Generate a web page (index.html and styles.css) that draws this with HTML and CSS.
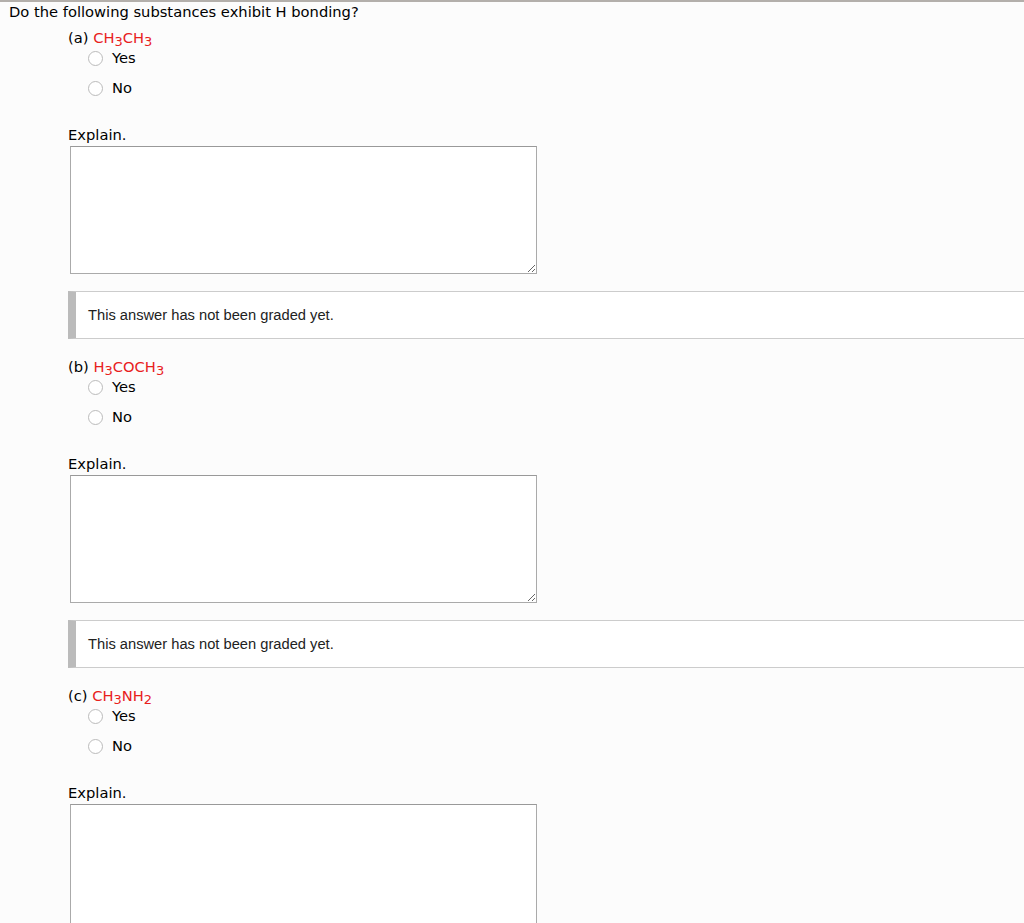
FILE: index.html
```html
<!DOCTYPE html>
<html lang="en">
<head>
    <meta charset="UTF-8">
    <title>H bonding</title>
    <link rel="stylesheet" href="styles.css">
</head>
<body>
    <div class="question">
        <p class="prompt">Do the following substances exhibit H bonding?</p>

        <div class="part">
            <div class="part-label">(a) <span class="formula">CH<sub>3</sub>CH<sub>3</sub></span></div>
            <label class="choice"><input type="radio" name="a"> Yes</label>
            <label class="choice"><input type="radio" name="a"> No</label>
            <div class="explain">Explain.</div>
            <textarea class="answer"></textarea>
            <div class="graded">This answer has not been graded yet.</div>
        </div>

        <div class="part">
            <div class="part-label">(b) <span class="formula">H<sub>3</sub>COCH<sub>3</sub></span></div>
            <label class="choice"><input type="radio" name="b"> Yes</label>
            <label class="choice"><input type="radio" name="b"> No</label>
            <div class="explain">Explain.</div>
            <textarea class="answer"></textarea>
            <div class="graded">This answer has not been graded yet.</div>
        </div>

        <div class="part">
            <div class="part-label">(c) <span class="formula">CH<sub>3</sub>NH<sub>2</sub></span></div>
            <label class="choice"><input type="radio" name="c"> Yes</label>
            <label class="choice"><input type="radio" name="c"> No</label>
            <div class="explain">Explain.</div>
            <textarea class="answer"></textarea>
        </div>
    </div>
</body>
</html>
```

FILE: styles.css
```css
body {
    margin: 0;
    background: #fcfcfc;
    font-family: "DejaVu Sans", Verdana, sans-serif;
    font-size: 14.7px;
    color: #000;
    border-top: 2px solid #b3afab;
    overflow: hidden;
}

.question {
    padding-left: 9px;
}

.prompt {
    margin: 0;
    line-height: 20px;
}

.part {
    padding-left: 59px;
    display: flex;
    flex-direction: column;
    align-items: flex-start;
}

.part + .part {
    margin-top: 12px;
}

.part-label {
    margin-top: 6px;
    line-height: 20px;
}

.formula {
    color: #e8201c;
}

sub {
    font-size: 13px;
    vertical-align: -3px;
    line-height: 0;
}

.choice {
    display: flex;
    align-items: center;
    gap: 9px;
    margin-left: 20px;
    line-height: 20px;
    height: 20px;
}

.choice + .choice {
    margin-top: 10px;
}

.choice input {
    appearance: none;
    width: 15px;
    height: 15px;
    margin: 0;
    border: 1px solid #bbb;
    border-radius: 50%;
    background: #fff;
}

.explain {
    margin-top: 27px;
    line-height: 20px;
}

.answer {
    box-sizing: border-box;
    margin: 1px 0 0 2px;
    width: 467px;
    height: 128px;
    border: 1px solid #aaa;
    border-top-color: #999;
    background: #fff;
    resize: both;
}

.graded {
    box-sizing: border-box;
    margin-top: 17px;
    width: 960px;
    height: 48px;
    padding-left: 12px;
    display: flex;
    align-items: center;
    background: #fff;
    border: 1px solid #ccc;
    border-left: 8px solid #bbb;
    border-right: none;
    font-family: "Liberation Sans", Arial, sans-serif;
    font-size: 14.7px;
    color: #222;
}
```
